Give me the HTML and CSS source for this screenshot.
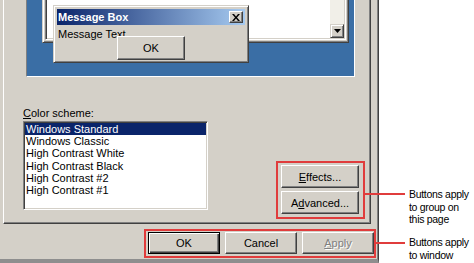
FILE: index.html
```html
<!DOCTYPE html>
<html lang="en">
<head>
<meta charset="utf-8">
<title>Display Properties</title>
<link rel="stylesheet" href="styles.css">
</head>
<body>
<div class="screen">
  <div class="dialog">
    <div class="page">
      <div class="preview">
        <div class="win">
          <div class="win-client">
            <div class="win-text"></div>
            <div class="win-scroll">
              <div class="sb-btn"><svg width="7" height="4" viewBox="0 0 7 4"><path d="M0 0h7L3.5 4z"/></svg></div>
            </div>
          </div>
        </div>
        <div class="msgbox">
          <div class="msg-title">
            <span>Message Box</span>
            <span class="msg-close"><svg width="8" height="7" viewBox="0 0 8 7"><path d="M0 0h2l2 2.5L6 0h2L5 3.5 8 7H6L4 4.5 2 7H0l3-3.5z"/></svg></span>
          </div>
          <div class="msg-body">Message Text</div>
          <button class="btn msg-ok">OK</button>
        </div>
      </div>
      <div class="lower">
        <div class="scheme">
          <div class="label"><u>C</u>olor scheme:</div>
          <ul class="listbox">
            <li class="sel">Windows Standard</li>
            <li>Windows Classic</li>
            <li>High Contrast White</li>
            <li>High Contrast Black</li>
            <li>High Contrast #2</li>
            <li>High Contrast #1</li>
          </ul>
        </div>
        <div class="callout group-btns">
          <button class="btn btn-page"><u>E</u>ffects...</button>
          <button class="btn btn-page">A<u>d</u>vanced...</button>
        </div>
      </div>
    </div>
    <div class="footer">
      <div class="callout win-btns">
        <button class="btn btn-win default">OK</button>
        <button class="btn btn-win">Cancel</button>
        <button class="btn btn-win disabled"><u>A</u>pply</button>
      </div>
    </div>
  </div>
  <div class="notes">
    <p class="note note1">Buttons apply<br>to group on<br>this page</p>
    <p class="note note2">Buttons apply<br>to window</p>
  </div>
</div>
</body>
</html>
```

FILE: styles.css
```css
* { box-sizing: border-box; }

body {
  margin: 0;
  background: #fff;
  font: 11px "Liberation Sans", Arial, sans-serif;
  color: #000;
}

.screen {
  display: flex;
  width: 474px;
  height: 263px;
  overflow: hidden;
}

.dialog {
  flex: none;
  width: 379px;
  height: 263px;
  background: #d4d0c8;
  border-right: 1px solid #404040;
  border-bottom: 4px solid #8e8e8e;
  box-shadow: inset -1px 0 #808080;
  display: flex;
  flex-direction: column;
}

.page {
  flex: none;
  margin-left: 3px;
  width: 368px;
  height: 224px;
  border-left: 1px solid #fff;
  border-right: 1px solid #404040;
  border-bottom: 1px solid #404040;
  box-shadow: inset -1px -1px #808080;
  display: flex;
  flex-direction: column;
}

/* preview monitor */
.preview {
  flex: none;
  position: relative;
  overflow: hidden;
  margin-left: 22px;
  width: 329px;
  height: 77px;
  background: #3a6ea5;
  border-left: 1px solid #808080;
  border-right: 1px solid #fff;
  border-bottom: 1px solid #fff;
}

.win {
  position: absolute;
  left: 15px;
  top: -8px;
  width: 307px;
  height: 51px;
  background: #d4d0c8;
  border: 1px solid;
  border-color: #d4d0c8 #404040 #404040 #d4d0c8;
  box-shadow: inset 1px 1px #fff, inset -1px -1px #808080;
  padding: 2px;
  display: flex;
}

.win-client {
  flex: 1;
  display: flex;
  border: 1px solid;
  border-color: #808080 #fff #fff #808080;
  box-shadow: inset 1px 1px #404040, inset -1px -1px #d4d0c8;
  padding: 1px;
}

.win-text { flex: 1; background: #fff; }

.win-scroll {
  width: 14px;
  background: #f1efe8;
  display: flex;
  flex-direction: column;
  justify-content: flex-end;
}

.sb-btn {
  height: 14px;
  background: #d4d0c8;
  border: 1px solid;
  border-color: #d4d0c8 #404040 #404040 #d4d0c8;
  box-shadow: inset 1px 1px #fff, inset -1px -1px #808080;
  display: flex;
  align-items: center;
  justify-content: center;
}

.msgbox {
  position: absolute;
  left: 26px;
  top: 5px;
  width: 196px;
  height: 58px;
  background: #d4d0c8;
  border: 1px solid;
  border-color: #d4d0c8 #404040 #404040 #d4d0c8;
  box-shadow: inset 1px 1px #fff, inset -1px -1px #808080;
  padding: 3px;
}

.msg-title {
  height: 16px;
  background: linear-gradient(to right, #0a246a, #a6caf0);
  color: #fff;
  font-weight: bold;
  line-height: 16px;
  padding: 0 2px 0 1px;
  display: flex;
  align-items: center;
  justify-content: space-between;
}

.msg-close {
  width: 14px;
  height: 12px;
  background: #d4d0c8;
  border: 1px solid;
  border-color: #fff #404040 #404040 #fff;
  box-shadow: inset -1px -1px #808080;
  display: flex;
  align-items: center;
  justify-content: center;
}

.msg-body {
  padding: 3px 0 0 1px;
  line-height: 13px;
}

/* buttons */
.btn {
  font: inherit;
  color: #000;
  margin: 0;
  padding: 0;
  background: #d4d0c8;
  border: 1px solid;
  border-color: #fff #404040 #404040 #fff;
  box-shadow: inset -1px -1px #808080;
  display: flex;
  align-items: center;
  justify-content: center;
}

.msg-ok {
  position: absolute;
  left: 63px;
  top: 30px;
  width: 68px;
  height: 24px;
}

.btn.default {
  border-color: #000;
  box-shadow: inset 1px 1px #fff, inset -1px -1px #404040, inset -2px -2px #808080;
}

.btn.disabled {
  color: #808080;
  text-shadow: 1px 1px #fff;
}

/* lower section */
.lower {
  flex: none;
  margin-top: 29px;
  height: 116px;
  display: flex;
  align-items: flex-end;
}

.scheme {
  margin-left: 19px;
  margin-bottom: 12px;
}

.label {
  line-height: 13px;
  margin-bottom: 1px;
}

.listbox {
  width: 185px;
  height: 89px;
  margin: 0;
  padding: 1px;
  list-style: none;
  background: #fff;
  border: 1px solid;
  border-color: #808080 #fff #fff #808080;
  box-shadow: inset 1px 1px #404040, inset -1px -1px #d4d0c8;
}

.listbox li {
  line-height: 12.2px;
  padding-left: 1px;
  white-space: nowrap;
}

.listbox li.sel {
  background: #0a246a;
  color: #fff;
}

/* red callouts */
.callout {
  position: relative;
  border: 2px solid #e03c3c;
}

.callout::after {
  content: "";
  position: absolute;
  left: 100%;
  height: 2px;
  background: #e03c3c;
}

.group-btns {
  margin-left: auto;
  margin-right: 5px;
  margin-bottom: 3px;
  width: 89px;
  height: 58px;
  padding: 2px 4px 3px 3px;
  display: flex;
  flex-direction: column;
  gap: 3px;
}

.group-btns::after { top: 30px; width: 42px; }

.btn-page { width: 78px; height: 23px; }

.footer {
  flex: none;
  height: 35px;
  padding: 5px 2px 0 0;
  display: flex;
  justify-content: flex-end;
  align-items: flex-start;
}

.win-btns {
  width: 232px;
  height: 29px;
  padding: 1px 0 2px 2px;
  display: flex;
  gap: 5px;
}

.win-btns::after { top: 11px; width: 31px; }

.btn-win { width: 72px; height: 22px; }

/* notes */
.notes {
  flex: 1;
  padding: 188px 0 0 30px;
  font-size: 10.5px;
  letter-spacing: -0.3px;
  line-height: 12.5px;
}

.note { margin: 0; white-space: nowrap; }
.note2 { margin-top: 10.5px; }
```
